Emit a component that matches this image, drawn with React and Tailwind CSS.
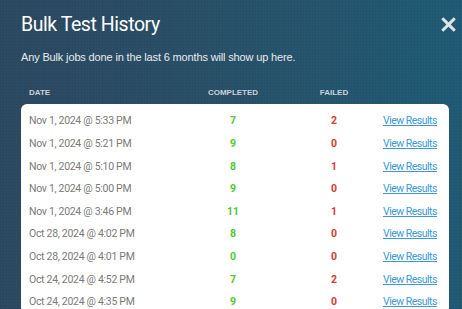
import { useState } from 'react';

const ROWS = [
  { date: 'Nov 1, 2024 @ 5:33 PM', completed: 7, failed: 2 },
  { date: 'Nov 1, 2024 @ 5:21 PM', completed: 9, failed: 0 },
  { date: 'Nov 1, 2024 @ 5:10 PM', completed: 8, failed: 1 },
  { date: 'Nov 1, 2024 @ 5:00 PM', completed: 9, failed: 0 },
  { date: 'Nov 1, 2024 @ 3:46 PM', completed: 11, failed: 1 },
  { date: 'Oct 28, 2024 @ 4:02 PM', completed: 8, failed: 0 },
  { date: 'Oct 28, 2024 @ 4:01 PM', completed: 0, failed: 0 },
  { date: 'Oct 24, 2024 @ 4:52 PM', completed: 7, failed: 2 },
  { date: 'Oct 24, 2024 @ 4:35 PM', completed: 9, failed: 0 },
];

export default function App() {
  const [open, setOpen] = useState(true);

  return (
    <div className="relative w-[462px] h-[309px] overflow-hidden bg-[repeating-linear-gradient(0deg,rgba(0,0,0,0.035)_0px,rgba(0,0,0,0.035)_1px,transparent_1px,transparent_3px),repeating-linear-gradient(90deg,rgba(0,0,0,0.035)_0px,rgba(0,0,0,0.035)_1px,transparent_1px,transparent_3px),linear-gradient(90deg,#2d4a62_0%,#28536c_55%,#205c76_100%)] font-['Liberation_Sans',Arial,sans-serif]">
      {/* 닫기 버튼 */}
      <button
        onClick={() => setOpen(!open)}
        className="absolute right-[6px] top-[16px] w-[16px] h-[16px] flex items-center justify-center"
      >
        <svg viewBox="0 0 16 16" className="w-[15px] h-[15px]">
          <path d="M2.5 2.5 L13.5 13.5 M13.5 2.5 L2.5 13.5" stroke="#dfe4e8" strokeWidth="3.2" strokeLinecap="square" />
        </svg>
      </button>

      <div className="pl-[21px] pt-[11px]">
        <h2 className="text-[19.5px] leading-[28px] text-white font-['Roboto',sans-serif] tracking-[-0.45px]">Bulk Test History</h2>
        <p className="mt-[10px] text-[11px] leading-[16px] text-[#e6ebef] tracking-[-0.15px]">
          Any Bulk jobs done in the last 6 months will show up here.
        </p>

        <div className="mt-[21px] flex items-center h-[14px] pl-[8px] text-[8px] font-bold text-[#c9d1d8] uppercase">
          <div className="w-[174px]">Date</div>
          <div className="w-[60px] text-center">Completed</div>
          <div className="w-[41px]" />
          <div className="w-[60px] text-center">Failed</div>
        </div>

        <div className="mt-[4px] w-[428px] bg-white rounded-[6px] pt-[6px] pl-[8px]">
          {ROWS.map((r, i) => (
            <div key={i} className="flex items-center h-[22.6px] text-[10.5px] font-['Roboto',sans-serif]">
              <div className="w-[174px] text-[#7a7a7a] tracking-[-0.3px]">{r.date}</div>
              <div className="w-[60px] text-center font-bold text-[#55c533]">{r.completed}</div>
              <div className="w-[41px]" />
              <div className="w-[60px] text-center font-bold text-[#d93a35]">{r.failed}</div>
              <div className="w-[19px]" />
              <a href="#" className="text-[#3c98d8] underline tracking-[-0.5px]">View Results</a>
            </div>
          ))}
        </div>
      </div>
    </div>
  );
}
